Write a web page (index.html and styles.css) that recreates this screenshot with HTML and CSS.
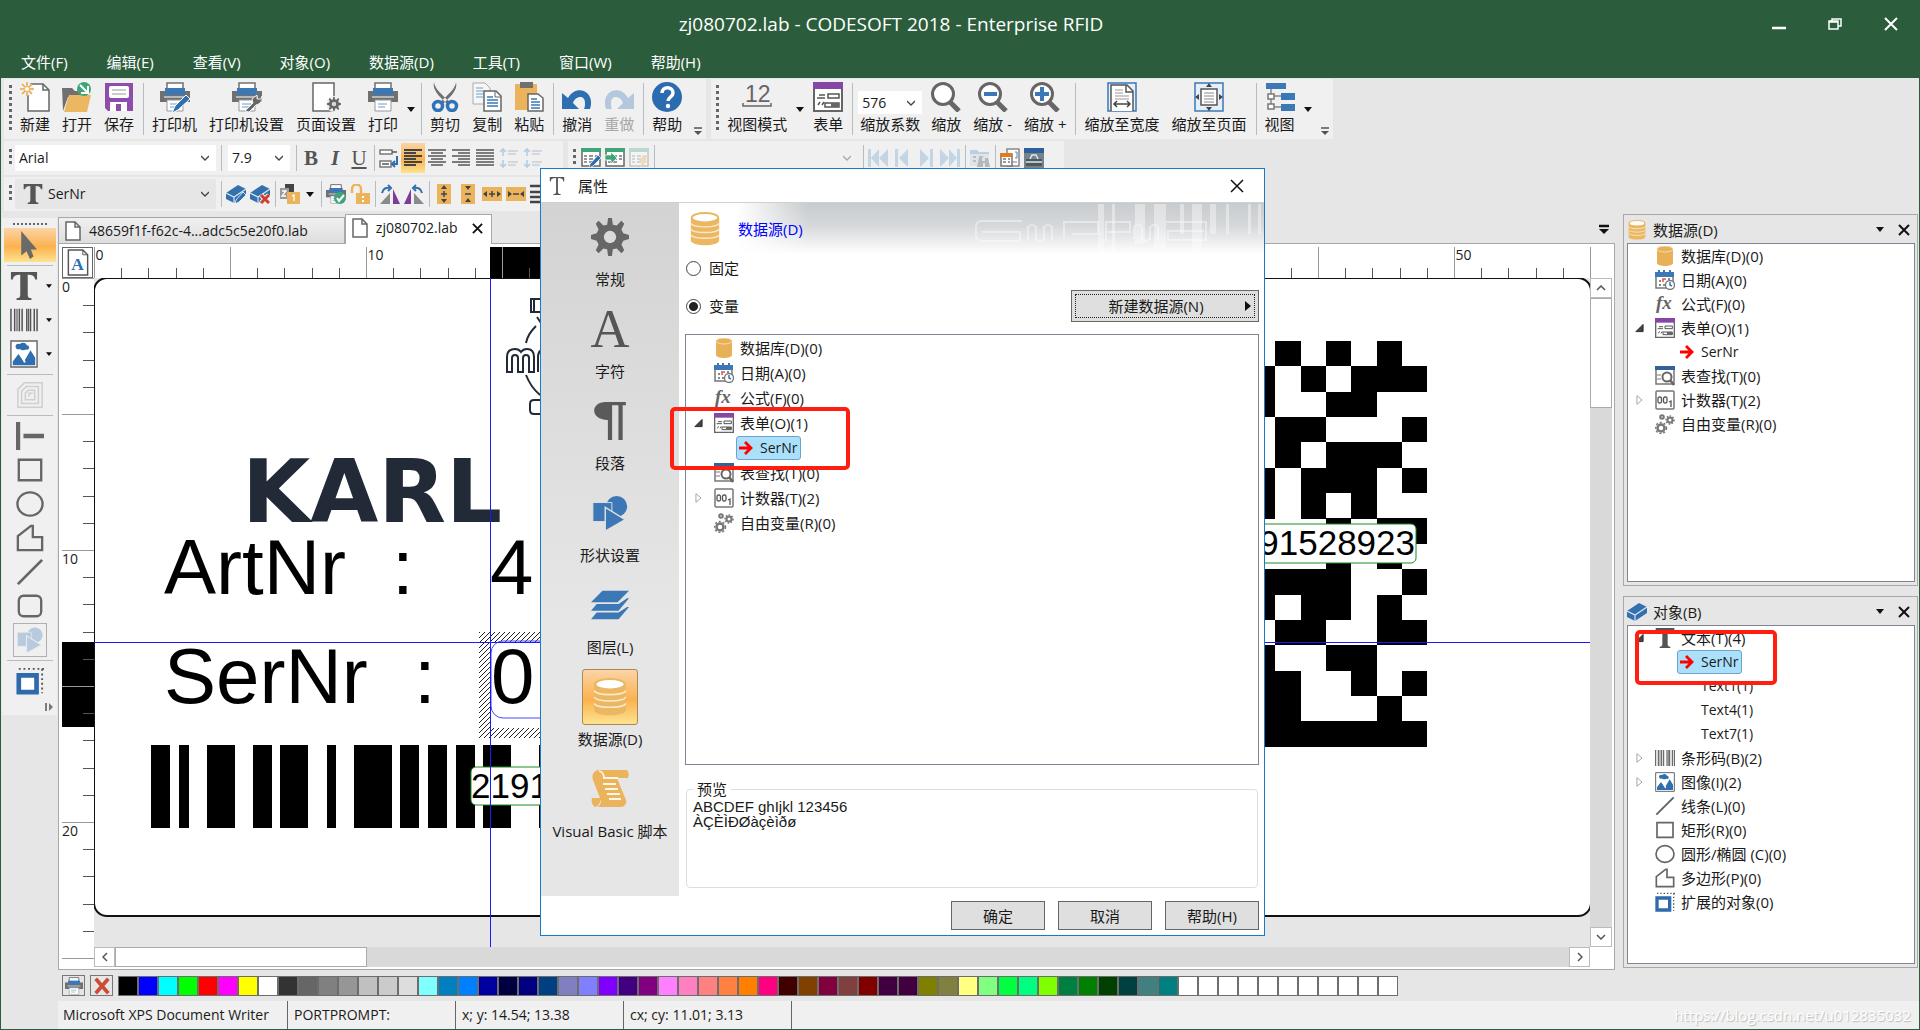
FILE: index.html
```html
<!DOCTYPE html>
<html lang="zh-CN">
<head>
    <meta charset="UTF-8">
    <meta name="viewport" content="width=device-width, initial-scale=1.0">
    <title>zj080702.lab - CODESOFT 2018 - Enterprise RFID</title>
    <link rel="stylesheet" href="styles.css">
</head>
<body>
    <svg class="sprite" aria-hidden="true">
        <symbol id="i-new" viewBox="0 0 30 30"><path d="M8 2h15l6 6v21H8z" fill="#fff" stroke="#666" stroke-width="1.5"/><path d="M23 2v6h6" fill="none" stroke="#666" stroke-width="1.5"/><circle cx="7" cy="7" r="6.5" fill="#f0f0f0"/><path d="M7 0v14M0 7h14M2 2l10 10M12 2L2 12" stroke="#e8a84a" stroke-width="1.5"/><circle cx="7" cy="7" r="2" fill="#fff"/></symbol>
        <symbol id="i-open" viewBox="0 0 30 30"><path d="M0 6h10l3 3h10v6H6L1 29z" fill="#707070"/><path d="M7 13h22l-4 17H2z" fill="#ebb762"/><circle cx="22" cy="7" r="7" fill="#3fa578"/><path d="M18 3l7 7M26 4v7h-7" fill="none" stroke="#fff" stroke-width="2"/></symbol>
        <symbol id="i-save" viewBox="0 0 30 30"><path d="M1 1h28v28H4l-3-3z" fill="#8e4cac"/><rect x="5" y="4" width="20" height="12" rx="2" fill="#fff"/><path d="M8 8h14M8 12h14" stroke="#999"/><path d="M6 20h17v9H6z" fill="#fff"/><path d="M12 22h5v7h-5z" fill="#8e4cac"/></symbol>
        <symbol id="i-printer" viewBox="0 0 30 30"><path d="M7 7V1h16v6" fill="#fff" stroke="#707070" stroke-width="1.5"/><path d="M0 9h30v11H0z" fill="#707070"/><path d="M5 6h20v7H5z" fill="#3b78b5"/><path d="M4 15h22" stroke="#fff"/><path d="M7 18h16v11H7z" fill="#fff" stroke="#999"/><path d="M10 22h9M10 25h7" stroke="#9dbfe0" stroke-width="1.5"/></symbol>
        <symbol id="i-pencil" viewBox="0 0 30 30"><path d="M26 13l4 4-12 11-6 3 3-7z" fill="#2f6fb0" stroke="#fff" stroke-width="1"/></symbol>
        <symbol id="i-gear" viewBox="0 0 40 40"><path d="M18 0h4l1 7 4 1 5-5 3 3-3 6 2 4 6 2v4l-6 2-2 4 3 6-3 3-5-5-4 1-1 7h-4l-1-7-4-1-5 5-3-3 3-6-2-4-6-2v-4l6-2 2-4-3-6 3-3 5 5 4-1z" fill="#666"/><circle class="hole" cx="20" cy="20" r="6.5" fill="#dadada"/></symbol>
        <symbol id="i-page-gear" viewBox="0 0 30 30"><path d="M2 1h21v28H2z" fill="#fff" stroke="#666" stroke-width="1.5"/><circle cx="23" cy="22" r="8" fill="#f0f0f0"/><use href="#i-gear" x="16" y="15" width="14" height="14"/></symbol>
        <symbol id="i-cut" viewBox="0 0 30 30"><path d="M4 0c0 6 9 14 16 20l-3 2C9 14 2 8 4 0zM26 0c0 6-9 14-16 20l3 2C21 14 28 8 26 0z" fill="#707070"/><circle cx="8" cy="24" r="4.500" fill="none" stroke="#2f74b8" stroke-width="3.500"/><circle cx="22" cy="24" r="4.500" fill="none" stroke="#2f74b8" stroke-width="3.500"/></symbol>
        <symbol id="i-copy" viewBox="0 0 30 30"><path d="M1 1h12l5 5v16H1z" fill="#f7f7f7" stroke="#aaa"/><path d="M4 6h7M4 9h7M4 12h7M4 15h7" stroke="#6b9fd3"/><path d="M12 9h12l5 5v15H12z" fill="#fff" stroke="#666" stroke-width="1.5"/><path d="M23 9v6h6" fill="none" stroke="#666"/><path d="M15 15h6M15 18h11M15 21h11M15 24h11" stroke="#3b78b5" stroke-width="1.5"/></symbol>
        <symbol id="i-paste" viewBox="0 0 30 30"><path d="M1 2h22v26H1z" fill="#ebb45c"/><path d="M6 0h3l2-1h3l2 1h3v6H6z" fill="#707070"/><path d="M14 12h10l5 4v13H14z" fill="#fff" stroke="#666" stroke-width="1.5"/><path d="M17 17h6M17 20h9M17 23h9M17 26h9" stroke="#3b78b5" stroke-width="1.5"/></symbol>
        <symbol id="i-undo" viewBox="0 0 30 30"><path d="M0 11v16h17l-6-6c2-7 12-9 12 0 0 2 0 4-1 6h6c6-18-14-26-22-11z" fill="#2d6fb2"/></symbol>
        <symbol id="i-help" viewBox="0 0 30 30"><circle cx="15" cy="15" r="15" fill="#2b6cb0"/><path d="M10 11c0-7 11-7 11 0 0 4-5 4-5 8" fill="none" stroke="#fff" stroke-width="3.5"/><circle cx="16" cy="24" r="2.2" fill="#fff"/></symbol>
        <symbol id="i-mode" viewBox="0 0 30 30"><path d="M1 21v3h28v-3" fill="none" stroke="#666" stroke-width="1.5"/><text x="3" y="20" class="mode-text">12</text></symbol>
        <symbol id="i-form" viewBox="0 0 30 30"><path d="M1 1h28v28H1z" fill="#fff" stroke="#666" stroke-width="2"/><path d="M0 0h30v7H0z" fill="#8646a5"/><path d="M6 13h6M4 16h8M5 23l2-3M9 23l2-3" stroke="#555" stroke-width="1.5"/><path d="M15 12h11v4H15zM12 21h14v4H12z" fill="#fff" stroke="#555" stroke-width="1.5"/><path d="M18 21h8v4h-8z" fill="#666"/></symbol>
        <symbol id="i-zoom" viewBox="0 0 30 30"><circle cx="12" cy="12" r="10.5" fill="#fff" stroke="#666" stroke-width="3"/><path d="M19 20l9 9" stroke="#666" stroke-width="5"/></symbol>
        <symbol id="i-zoom-out" viewBox="0 0 30 30"><use href="#i-zoom"/><path d="M6 12h13" stroke="#3b78b5" stroke-width="4"/></symbol>
        <symbol id="i-zoom-in" viewBox="0 0 30 30"><use href="#i-zoom"/><path d="M5 12h14M12 5v14" stroke="#3b78b5" stroke-width="4"/></symbol>
        <symbol id="i-fit-width" viewBox="0 0 30 30"><path d="M1 1h28v28H1z" fill="#e4eff9" stroke="#3b78b5" stroke-width="1.5"/><path d="M4 29V3h16l6 6v20" fill="#fff" stroke="#555" stroke-width="1.5"/><path d="M19 3v7h7" fill="none" stroke="#555" stroke-width="1.5"/><path d="M8 8h8M8 11h8M8 14h14M8 17h14" stroke="#999"/><path d="M8 22h14M10 19l-3 3 3 3M20 19l3 3-3 3" fill="none" stroke="#444" stroke-width="1.5"/></symbol>
        <symbol id="i-fit-page" viewBox="0 0 30 30"><path d="M1 1h28v28H1z" fill="#e4eff9" stroke="#3b78b5" stroke-width="1.5"/><path d="M7 7h16v16H7z" fill="#fff" stroke="#555" stroke-width="1.5"/><path d="M10 11h10M10 14h10M10 17h10M10 20h10" stroke="#888"/><path d="M15 1l3 4h-6zM15 29l3-4h-6zM1 15l4-3v6zM29 15l-4-3v6z" fill="#444"/></symbol>
        <symbol id="i-view" viewBox="0 0 30 30"><path d="M1 1h20v6H1zM16 11h14v7H16zM16 22h14v7H16z" fill="#3b78b5"/><path d="M6 7v19M6 14h10M6 25h10" fill="none" stroke="#888" stroke-width="1.5"/><path d="M3 12h6v5H3zM3 22h6v5H3z" fill="#fff" stroke="#777" stroke-width="1.5"/></symbol>
        <symbol id="i-block" viewBox="0 0 20 20"><path d="M1 2h12v4H1zM1 13h11v6H1z" fill="#fff" stroke="#777" stroke-width="1.5"/><path d="M13 4h5M3 16h7" stroke="#555" stroke-width="1.5"/><path d="M18 8v8h-4M16 13l-3 3 3 3" fill="none" stroke="#2f6fb0" stroke-width="2"/></symbol>
        <symbol id="i-left" viewBox="0 0 20 20"><path d="M1 2h18M1 5h12M1 8h18M1 11h12M1 14h18M1 17h12" stroke="#444" stroke-width="1.8"/></symbol>
        <symbol id="i-center" viewBox="0 0 20 20"><path d="M1 2h18M4 5h12M1 8h18M4 11h12M1 14h18M4 17h12" stroke="#555" stroke-width="1.6"/></symbol>
        <symbol id="i-right" viewBox="0 0 20 20"><path d="M1 2h18M7 5h12M1 8h18M7 11h12M1 14h18M7 17h12" stroke="#555" stroke-width="1.6"/></symbol>
        <symbol id="i-justify" viewBox="0 0 20 20"><path d="M1 2h18M1 5h18M1 8h18M1 11h18M1 14h18M1 17h18" stroke="#555" stroke-width="1.6"/></symbol>
        <symbol id="i-space" viewBox="0 0 20 20"><path d="M9 3h10M9 6h8M9 14h10M9 17h8" stroke="#c9ced3" stroke-width="1.6"/><path d="M4 8V1M1 4l3-3 3 3M4 12v7M1 16l3 3 3-3" fill="none" stroke="#b5cbe0" stroke-width="1.6"/></symbol>
        <symbol id="i-table" viewBox="0 0 20 20"><path d="M1 1h18v17H1z" fill="#fff" stroke="#666" stroke-width="1.5"/><path d="M0 0h20v4H0z" fill="#3fa578"/><path d="M3 8h3M8 8h4M14 8h3M3 11h3M8 11h4M14 11h3M3 14h3M8 14h4" stroke="#777" stroke-width="1.5"/></symbol>
        <symbol id="i-table-edit" viewBox="0 0 20 20"><use href="#i-table"/><path d="M17 7l3 3-8 8-4 2 1-4z" fill="#2f6fb0" stroke="#fff" stroke-width=".7"/></symbol>
        <symbol id="i-table-import" viewBox="0 0 20 20"><use href="#i-table"/><path d="M0 7h6V4l6 6-6 6v-4H0z" fill="#3fa578" stroke="#fff" stroke-width=".7"/></symbol>
        <symbol id="i-table-flash" viewBox="0 0 20 20"><use href="#i-table"/><path d="M14 7l5 1-4 4 4 1-9 7 3-6-3-1z" fill="#e8a84a"/></symbol>
        <symbol id="i-prev" viewBox="0 0 20 20"><path d="M3 1h3v18H3zM16 1v18L7 10z" fill="#c3d4e5"/></symbol>
        <symbol id="i-first" viewBox="0 0 20 20"><path d="M0 1h3v18H0zM11 1v18l-8-9zM20 1v18l-9-9z" fill="#c3d4e5"/></symbol>
        <symbol id="i-find" viewBox="0 0 20 20"><path d="M0 2h7l2 2h10v14H0z" fill="#dde4ea"/><path d="M0 2h7l2 2h10v2H0z" fill="#bcd0e3"/><path d="M3 9h3M9 9h4M3 13h3" stroke="#b9bec2" stroke-width="2"/><path d="M9 10h3v3h3v-3h3l2 9h-5v-4h-2v4H7z" fill="#b4b8bc"/></symbol>
        <symbol id="i-forms" viewBox="0 0 20 20"><path d="M7 1h12v17H7z" fill="#fff" stroke="#888" stroke-width="1.5"/><path d="M15 4h2v6h-2M9 14h8" fill="none" stroke="#6a7fa8"/><path d="M1 6h11v12H1z" fill="#fff" stroke="#777" stroke-width="1.5"/><path d="M0 5h12v4H0z" fill="#e27a1f"/><path d="M3 11h3M8 11h2M3 14h3M8 14h2" stroke="#777" stroke-width="1.5"/></symbol>
        <symbol id="i-toolbox" viewBox="0 0 20 20"><path d="M0 0h20v20H0z" fill="#77828b"/><path d="M0 0h20v5H0z" fill="#2d5f9c"/><path d="M2 11h16v7H2z" fill="#4d5961"/><path d="M6 11l2-4h4l2 4M2 14h16" fill="none" stroke="#dfe6ea" stroke-width="1.5"/></symbol>
        <symbol id="i-cube" viewBox="0 0 20 20"><path d="M0 9L12 1l8 4v6L8 19l-8-4z" fill="#3470ad"/><path d="M0 9l8 4 12-8M8 13v6" fill="none" stroke="#d8e6f3" stroke-width="1.2"/></symbol>
        <symbol id="i-cube-edit" viewBox="0 0 20 20"><use href="#i-cube"/><path d="M17 8l3 3-7 7-4 2 1-4z" fill="#2f6fb0" stroke="#fff" stroke-width=".8"/></symbol>
        <symbol id="i-cube-del" viewBox="0 0 20 20"><use href="#i-cube"/><path d="M11 11l8 8M19 11l-8 8" stroke="#f0f0f0" stroke-width="5"/><path d="M11 11l8 8M19 11l-8 8" stroke="#cf3f2b" stroke-width="3"/></symbol>
        <symbol id="i-order" viewBox="0 0 20 20"><path d="M5 0h9v9H5z" fill="#444"/><path d="M0 4h9v11H0z" fill="#9a9a9a"/><path d="M7 8h13v12H7z" fill="#ebb45c"/><path d="M2 7h4l-4 5h4M12 12l2-1v6" fill="none" stroke="#fff" stroke-width="1.3"/></symbol>
        <symbol id="i-print-ok" viewBox="0 0 20 20"><use href="#i-printer" width="20" height="20"/><circle cx="14" cy="14" r="6" fill="#3fa578"/><path d="M11 14l2 3 5-6" fill="none" stroke="#fff" stroke-width="2"/></symbol>
        <symbol id="i-lock" viewBox="0 0 20 20"><path d="M2 9V5c0-6 9-6 9 0v4" fill="none" stroke="#ebb45c" stroke-width="2.5"/><path d="M6 9h14v11H6z" fill="#ebb45c"/><path d="M13 12v2M13 16v2" stroke="#fff" stroke-width="2"/></symbol>
        <symbol id="i-flip" viewBox="0 0 20 20"><path d="M10 9v11H0z" fill="#8a8a8a"/><path d="M13 5v15h7z" fill="#7d3c9c"/><path d="M2 9c1-5 5-6 9-5M8 1l3 3-3 3" fill="none" stroke="#2f6fb0" stroke-width="2"/></symbol>
        <symbol id="i-vexpand" viewBox="0 0 20 20"><path d="M3 0h14v20H3z" fill="#ebb45c"/><path d="M10 1l3 4H7zM10 19l3-4H7z" fill="#444"/><path d="M7 10h6M10 7v6" stroke="#444" stroke-width="1.5"/></symbol>
        <symbol id="i-vshrink" viewBox="0 0 20 20"><path d="M3 0h14v20H3z" fill="#ebb45c"/><path d="M10 6l3-4H7zM10 14l3 4H7z" fill="#444"/><path d="M7 10h6" stroke="#444" stroke-width="1.5"/></symbol>
        <symbol id="i-hexpand" viewBox="0 0 20 20"><path d="M0 3h20v14H0z" fill="#ebb45c"/><path d="M1 10l4-3v6zM19 10l-4-3v6z" fill="#444"/><path d="M7 10h6M10 7v6" stroke="#444" stroke-width="1.5"/></symbol>
        <symbol id="i-hshrink" viewBox="0 0 20 20"><path d="M0 3h20v14H0z" fill="#ebb45c"/><path d="M6 10L2 7v6zM14 10l4-3v6z" fill="#444"/><path d="M7 10h6" stroke="#444" stroke-width="1.5"/></symbol>
        <symbol id="i-lines" viewBox="0 0 20 20"><path d="M0 2h20M0 8h20M0 13h20M0 18h20" stroke="#444" stroke-width="2.5"/></symbol>
        <symbol id="i-text" viewBox="0 0 30 30"><path d="M1 0h28v8h-2c-1-4-3-5-8-5v21c0 3 1 4 4 4v2H7v-2c3 0 4-1 4-4V3c-5 0-7 1-8 5H1z" fill="#555"/></symbol>
        <symbol id="i-text-thin" viewBox="0 0 16 20"><path d="M0 0h16v5h-1c0-3-2-4-6-4v16c0 1 1 2 3 2v1H4v-1c2 0 3-1 3-2V1C3 1 1 2 1 5H0z" fill="#555"/></symbol>
        <symbol id="i-barcode" viewBox="0 0 30 24"><path d="M1 0v24M5 0v24M10 0v24M13 0v24M18 0v24M22 0v24M26 0v24M29 0v24" stroke="#555" stroke-width="1.6"/><path d="M7.500 0v24M20 0v24" stroke="#333"/></symbol>
        <symbol id="i-image" viewBox="0 0 30 30"><path d="M1 1h28v28H1z" fill="#fff" stroke="#666" stroke-width="1.5"/><path d="M3 27v-4l6-8 6 8 7-12 5 8v8z" fill="#2f6fb0"/><path d="M11 15l5 9" stroke="#fff" stroke-width="2"/><circle cx="9" cy="7" r="3" fill="#2f6fb0"/><circle cx="14" cy="7" r="4" fill="#2f6fb0"/><circle cx="18" cy="8" r="2.500" fill="#2f6fb0"/></symbol>
        <symbol id="i-rfid" viewBox="0 0 30 30"><path d="M2 28V9l7-7h19v26zM6 24V11l5-5h13v18zM10 20v-7l3-3h7v10zM14 17v-4h4" fill="none" stroke="#cfcfcf" stroke-width="1.6"/></symbol>
        <symbol id="i-arrow" viewBox="0 0 24 32"><path d="M2 0l18 21h-7l3 8-4 3-4-9-6 5z" fill="#6a6a6a"/></symbol>
        <symbol id="i-tline" viewBox="0 0 30 30"><path d="M2 0v30M8 15h22" stroke="#666" stroke-width="5"/></symbol>
        <symbol id="i-rect" viewBox="0 0 30 30"><path d="M3 4h24v22H3z" fill="none" stroke="#666" stroke-width="2.500"/></symbol>
        <symbol id="i-ellipse" viewBox="0 0 30 30"><ellipse cx="15" cy="15" rx="13.500" ry="12.500" fill="none" stroke="#666" stroke-width="2.500"/></symbol>
        <symbol id="i-poly" viewBox="0 0 30 30"><path d="M2 28V13L16 2h2v12h10v14z" fill="none" stroke="#666" stroke-width="2.500"/></symbol>
        <symbol id="i-line" viewBox="0 0 30 30"><path d="M2 28L28 2" stroke="#666" stroke-width="3"/></symbol>
        <symbol id="i-rrect" viewBox="0 0 30 30"><rect x="3" y="4" width="24" height="22" rx="5" fill="none" stroke="#666" stroke-width="2.500"/></symbol>
        <symbol id="i-shapes" viewBox="0 0 40 40"><circle cx="27" cy="13" r="11" fill="#3b78b5"/><path d="M2 9h20v20H2z" fill="#3b78b5" stroke="#e0e0e0" stroke-width="1"/><path d="M15 14l21 13-21 12z" fill="#3b78b5" stroke="#e0e0e0" stroke-width="1.500"/></symbol>
        <symbol id="i-extend" viewBox="0 0 30 30"><path d="M3 9h19v18H3z" fill="#fff" stroke="#2f6bab" stroke-width="5"/><path d="M3 2h27M28 2v26" stroke="#555" stroke-width="2" stroke-dasharray="2 3"/></symbol>
        <symbol id="i-doc" viewBox="0 0 16 20"><path d="M1 1h9l5 5v13H1z" fill="#fff" stroke="#666" stroke-width="1.500"/><path d="M10 1v5h5" fill="none" stroke="#666" stroke-width="1.500"/></symbol>
        <symbol id="i-stack" viewBox="0 0 32 36"><path d="M1 6v24c0 7 30 7 30 0V6z" fill="#ebb762"/><ellipse cx="16" cy="6" rx="14" ry="5" fill="#fff" stroke="#ebb762" stroke-width="2"/><path d="M1 12c2 5 28 5 30 0M1 18c2 5 28 5 30 0M1 24c2 5 28 5 30 0" fill="none" stroke="#fbe9c8" stroke-width="1.500"/></symbol>
        <symbol id="i-db" viewBox="0 0 20 20"><path d="M2 3v14c0 4 16 4 16 0V3z" fill="#e8b057"/><ellipse cx="10" cy="3" rx="8" ry="3" fill="#e8b057" stroke="#f7dcae"/></symbol>
        <symbol id="i-date" viewBox="0 0 20 20"><path d="M1 3h17v15H1z" fill="#fff" stroke="#777" stroke-width="1.500"/><path d="M0 2h19v5H0z" fill="#3b78b5"/><path d="M4 0v4M9 0v4M15 0v4" stroke="#3b78b5" stroke-width="2"/><path d="M4 11h2M4 15h2M8 15h2M13 9h2" stroke="#888" stroke-width="2"/><path d="M8 12V9h3" fill="none" stroke="#d9534f" stroke-width="1.500"/><circle cx="15" cy="15" r="4.500" fill="#fff" stroke="#777" stroke-width="1.300"/><path d="M15 12v3l2 1" fill="none" stroke="#3b78b5" stroke-width="1.500"/></symbol>
        <symbol id="i-fx" viewBox="0 0 20 20"><text x="1" y="15" class="fx">fx</text></symbol>
        <symbol id="i-lookup" viewBox="0 0 20 20"><path d="M1 1h18v17H1z" fill="#fff" stroke="#777" stroke-width="1.500"/><path d="M0 0h20v4H0z" fill="#2f6399"/><path d="M2 9h4M2 13h4" stroke="#777"/><circle cx="12" cy="11" r="4.500" fill="#fff" stroke="#666" stroke-width="2"/><path d="M15 14l4 5" stroke="#666" stroke-width="2.500"/></symbol>
        <symbol id="i-counter" viewBox="0 0 20 20"><rect x="1" y="1" width="18" height="18" rx="1" fill="#fff" stroke="#777" stroke-width="1.500"/><rect x="3" y="7" width="3.500" height="6" rx="1.500" fill="none" stroke="#555" stroke-width="1.300"/><rect x="8.500" y="7" width="3.500" height="6" rx="1.500" fill="none" stroke="#555" stroke-width="1.300"/><path d="M14 12l2-1v6" fill="none" stroke="#555" stroke-width="1.300"/></symbol>
        <symbol id="i-gears" viewBox="0 0 20 20"><g fill="none" stroke="#777"><circle cx="6" cy="14" r="3.500" stroke-width="2.500"/><circle cx="6" cy="14" r="5.500" stroke-width="1.500" stroke-dasharray="2 2"/><circle cx="15" cy="6" r="2.500" stroke-width="2"/><circle cx="15" cy="6" r="4" stroke-width="1.500" stroke-dasharray="1.500 1.500"/><circle cx="7" cy="3" r="1.800" stroke-width="2"/></g></symbol>
        <symbol id="i-go" viewBox="0 0 14 14"><path d="M0 7h11M6 1l6 6-6 6" fill="none" stroke="#f00" stroke-width="2.800"/></symbol>
        <symbol id="i-pilcrow" viewBox="0 0 30 36"><path d="M30 0v3h-3v33h-4V3h-6v33h-4V17C-4 17-4 0 11 0z" fill="#5a5a5a"/></symbol>
        <symbol id="i-layers" viewBox="0 0 40 30"><path d="M12 0h28L28 12H0zM6 14h23l9-6h2L29 21H0zM6 23h23l9-6h2L29 30H0z" fill="#3b78b5"/></symbol>
        <symbol id="i-script" viewBox="0 0 38 38"><path d="M8 0h28c2 2 2 5 1 8H26l9 22c1 4-2 7-5 7H6c4-2 5-6 3-9L2 10C0 4 4 0 8 0zM1 28h9c0 5-4 9-6 9-3-2-4-6-3-9z" fill="#ebb45c"/><path d="M8 1c4 1 5 4 5 7h14M12 14h13M14 19h13M16 24h13M18 29h12" fill="none" stroke="#fff6e4" stroke-width="1.800"/></symbol>
        <symbol id="i-open-node" viewBox="0 0 10 10"><path d="M9 1v8H1z" fill="#444" stroke="#222"/></symbol>
        <symbol id="i-closed-node" viewBox="0 0 10 14"><path d="M2 2l6 5-6 5z" fill="#fff" stroke="#999"/></symbol>
        <symbol id="i-x" viewBox="0 0 12 12"><path d="M1 1l10 10M11 1L1 11" stroke="#111" stroke-width="2"/></symbol>
        <symbol id="i-caret" viewBox="0 0 8 5"><path d="M0 0h8L4 5z" fill="#111"/></symbol>
        <symbol id="i-more" viewBox="0 0 8 8"><path d="M0 1h8" stroke="#555" stroke-width="1.500"/><path d="M0 4h8L4 8z" fill="#555"/></symbol>
    </svg>

    <header class="titlebar">
        <h1>zj080702.lab - CODESOFT 2018 - Enterprise RFID</h1>
        <div class="window-buttons">
            <button aria-label="最小化"><svg viewBox="0 0 14 14"><path d="M0 11h14" stroke="#fff" stroke-width="2.500"/></svg></button>
            <button aria-label="还原"><svg viewBox="0 0 14 14"><path d="M1 4h9v8H1zM4 4V2h9v7h-3M1 5h9" fill="none" stroke="#fff" stroke-width="1.500"/></svg></button>
            <button aria-label="关闭"><svg viewBox="0 0 14 14"><path d="M1 1l12 12M13 1L1 13" stroke="#fff" stroke-width="2"/></svg></button>
        </div>
    </header>
    <nav class="menubar">
        <a href="#">文件(F)</a><a href="#">编辑(E)</a><a href="#">查看(V)</a><a href="#">对象(O)</a><a href="#">数据源(D)</a><a href="#">工具(T)</a><a href="#">窗口(W)</a><a href="#">帮助(H)</a>
    </nav>

    <div class="toolbars">
        <div class="toolbar-row">
            <div class="toolbar large">
                <span class="grip"></span>
                <button><svg><use href="#i-new"/></svg>新建</button>
                <button><svg><use href="#i-open"/></svg>打开</button>
                <button><svg><use href="#i-save"/></svg>保存</button>
                <span class="sep"></span>
                <button><svg viewBox="0 0 30 30"><use href="#i-printer"/><use href="#i-pencil"/></svg>打印机</button>
                <button><svg viewBox="0 0 30 30"><use href="#i-printer"/><path d="M13 29l8-8-1-4 5-4v4h4l1-3c1 5-2 8-6 9l-7 7z" fill="#666" stroke="#f0f0f0"/></svg>打印机设置</button>
                <button><svg><use href="#i-page-gear"/></svg>页面设置</button>
                <button><svg><use href="#i-printer"/></svg>打印</button>
                <svg class="caret"><use href="#i-caret"/></svg>
                <span class="sep"></span>
                <button><svg><use href="#i-cut"/></svg>剪切</button>
                <button><svg><use href="#i-copy"/></svg>复制</button>
                <button><svg><use href="#i-paste"/></svg>粘贴</button>
                <span class="sep"></span>
                <button><svg><use href="#i-undo"/></svg>撤消</button>
                <button disabled><svg class="mirror"><use href="#i-undo"/></svg>重做</button>
                <span class="sep"></span>
                <button><svg><use href="#i-help"/></svg>帮助</button>
                <svg class="more"><use href="#i-more"/></svg>
            </div>
            <div class="toolbar large">
                <span class="grip"></span>
                <button><svg><use href="#i-mode"/></svg>视图模式</button>
                <svg class="caret"><use href="#i-caret"/></svg>
                <button><svg><use href="#i-form"/></svg>表单</button>
                <span class="sep"></span>
                <label class="zoom-factor"><select><option>576</option></select>缩放系数</label>
                <button><svg><use href="#i-zoom"/></svg>缩放</button>
                <button><svg><use href="#i-zoom-out"/></svg>缩放 -</button>
                <button><svg><use href="#i-zoom-in"/></svg>缩放 +</button>
                <span class="sep"></span>
                <button><svg><use href="#i-fit-width"/></svg>缩放至宽度</button>
                <button><svg><use href="#i-fit-page"/></svg>缩放至页面</button>
                <span class="sep"></span>
                <button><svg><use href="#i-view"/></svg>视图</button>
                <svg class="caret"><use href="#i-caret"/></svg>
                <svg class="more"><use href="#i-more"/></svg>
            </div>
        </div>
        <div class="toolbar-row">
            <div class="toolbar small">
                <span class="grip"></span>
                <select class="wide" aria-label="字体"><option>Arial</option></select>
                <span class="sep"></span>
                <select class="size" aria-label="字号"><option>7.9</option></select>
                <span class="sep"></span>
                <button class="letter bold">B</button>
                <button class="letter italic">I</button>
                <button class="letter underline">U</button>
                <span class="sep"></span>
                <button aria-label="文本块"><svg><use href="#i-block"/></svg></button>
                <button class="active" aria-label="左对齐"><svg><use href="#i-left"/></svg></button>
                <button aria-label="居中"><svg><use href="#i-center"/></svg></button>
                <button aria-label="右对齐"><svg><use href="#i-right"/></svg></button>
                <button aria-label="两端对齐"><svg><use href="#i-justify"/></svg></button>
                <button aria-label="增加间距"><svg><use href="#i-space"/></svg></button>
                <button aria-label="减小间距"><svg><use href="#i-space"/></svg></button>
                <span class="end-mark"></span>
            </div>
            <div class="toolbar small">
                <span class="grip"></span>
                <button aria-label="编辑表"><svg><use href="#i-table-edit"/></svg></button>
                <button aria-label="导入表"><svg><use href="#i-table-import"/></svg></button>
                <button aria-label="刷新" disabled><svg><use href="#i-table-flash"/></svg></button>
                <span class="sep"></span>
                <select class="wide blank" aria-label="记录" disabled><option></option></select>
                <span class="sep"></span>
                <button aria-label="首条"><svg><use href="#i-first"/></svg></button>
                <button aria-label="上一条"><svg><use href="#i-prev"/></svg></button>
                <button aria-label="下一条"><svg class="mirror"><use href="#i-prev"/></svg></button>
                <button aria-label="末条"><svg class="mirror"><use href="#i-first"/></svg></button>
                <span class="sep"></span>
                <button aria-label="查找"><svg><use href="#i-find"/></svg></button>
                <span class="sep"></span>
                <button aria-label="表单"><svg><use href="#i-forms"/></svg></button>
                <button aria-label="工具箱"><svg><use href="#i-toolbox"/></svg></button>
                <span class="end-mark"></span>
            </div>
        </div>
        <div class="toolbar-row">
            <div class="toolbar small">
                <span class="grip"></span>
                <label class="object-select"><svg><use href="#i-text"/></svg><select aria-label="对象"><option>SerNr</option></select></label>
                <span class="sep"></span>
                <button aria-label="编辑对象"><svg><use href="#i-cube-edit"/></svg></button>
                <button aria-label="删除对象"><svg><use href="#i-cube-del"/></svg></button>
                <span class="sep"></span>
                <button aria-label="次序"><svg><use href="#i-order"/></svg></button>
                <svg class="caret"><use href="#i-caret"/></svg>
                <span class="sep"></span>
                <button aria-label="可打印"><svg><use href="#i-print-ok"/></svg></button>
                <button aria-label="锁定"><svg><use href="#i-lock"/></svg></button>
                <span class="sep"></span>
                <button aria-label="右转"><svg><use href="#i-flip"/></svg></button>
                <button aria-label="左转"><svg class="mirror"><use href="#i-flip"/></svg></button>
                <span class="sep"></span>
                <button aria-label="增高"><svg><use href="#i-vexpand"/></svg></button>
                <button aria-label="减高"><svg><use href="#i-vshrink"/></svg></button>
                <button aria-label="加宽"><svg><use href="#i-hexpand"/></svg></button>
                <button aria-label="减宽"><svg><use href="#i-hshrink"/></svg></button>
                <button aria-label="线宽"><svg><use href="#i-lines"/></svg></button>
            </div>
        </div>
    </div>

    <div class="workspace">
        <aside class="tools">
            <div class="tool-list">
                <span class="grip-h"></span>
                <button class="active" aria-label="选择"><svg><use href="#i-arrow"/></svg></button>
                <hr>
                <button aria-label="文本"><svg><use href="#i-text"/></svg><svg class="caret"><use href="#i-caret"/></svg></button>
                <button aria-label="条形码"><svg><use href="#i-barcode"/></svg><svg class="caret"><use href="#i-caret"/></svg></button>
                <button aria-label="图像"><svg><use href="#i-image"/></svg><svg class="caret"><use href="#i-caret"/></svg></button>
                <hr>
                <button aria-label="RFID" disabled><svg><use href="#i-rfid"/></svg></button>
                <hr>
                <button aria-label="线条"><svg><use href="#i-tline"/></svg></button>
                <button aria-label="矩形"><svg><use href="#i-rect"/></svg></button>
                <button aria-label="圆形"><svg><use href="#i-ellipse"/></svg></button>
                <button aria-label="多边形"><svg><use href="#i-poly"/></svg></button>
                <button aria-label="斜线"><svg><use href="#i-line"/></svg></button>
                <button aria-label="圆角矩形"><svg><use href="#i-rrect"/></svg></button>
                <button class="boxed" aria-label="形状" disabled><svg><use href="#i-shapes"/></svg></button>
                <hr>
                <button aria-label="扩展的对象"><svg><use href="#i-extend"/></svg></button>
                <svg class="expand" viewBox="0 0 8 8"><path d="M1 0v8" stroke="#555" stroke-width="1.500"/><path d="M4 0v8l4-4z" fill="#777"/></svg>
            </div>
        </aside>

        <div class="content">
            <div class="columns">
                <main class="document">
                    <div class="tabs">
                        <button class="tab"><svg><use href="#i-doc"/></svg>48659f1f-f62c-4...adc5c5e20f0.lab</button>
                        <button class="tab current"><svg><use href="#i-doc"/></svg>zj080702.lab<svg class="close"><use href="#i-x"/></svg></button>
                        <svg class="tab-menu" viewBox="0 0 10 10"><path d="M0 2h10" stroke="#111" stroke-width="2.500"/><path d="M0 5h10L5 10z" fill="#111"/></svg>
                    </div>
                    <div class="frame">
                        <button class="corner" aria-label="标签属性"><svg viewBox="0 0 22 28"><path d="M1 1h15l5 5v21H1z" fill="#fff" stroke="#555" stroke-width="1.500"/><path d="M16 1v5h5" fill="none" stroke="#555"/><text x="4" y="22" class="corner-a">A</text></svg></button>
                        <svg class="ruler-h" id="rulerH"></svg>
                        <svg class="ruler-v" id="rulerV"></svg>
                        <svg class="sheet" id="sheet">
                            <defs>
                                <pattern id="hatch" width="5" height="5" patternUnits="userSpaceOnUse"><path d="M0 5L5 0" stroke="#222"/></pattern>
                            </defs>
                            <rect class="label" x="0" y="0" width="1497" height="638" rx="13"/>
                            <g class="logo">
                                <path d="M449 21h-12v13h12M440 21v13M443 39l4 6M442 48c-6 6-9 11-10 17M432 97c4 10 8 15 14 20M448 122h-8q-4 0-4 4v6q0 4 4 4h8"/>
                                <path d="M413 94V79q0-8 8-8 4 0 6 3 2-3 6-3 7 0 7 8v15h-5V80q0-3-3-3t-3 3v14h-5V80q0-3-3-3t-3 3v14zM444 94V79q0-6 5-8"/>
                            </g>
                            <text class="brand" x="148" y="244">KARL</text>
                            <g class="field">
                                <text x="70" y="316">ArtNr</text><text x="298" y="316">:</text><text x="396" y="316">4</text>
                                <text x="70" y="425">SerNr</text><text x="320" y="425">:</text><text x="397" y="425">0</text>
                            </g>
                            <path d="M385 354h330v106H385zM396 364v86h309v-86z" fill="url(#hatch)" fill-rule="evenodd"/>
                            <rect class="selection" x="397" y="363" width="300" height="77" rx="12"/>
                            <g class="crisp" id="bars"></g>
                            <rect class="caption-box" x="377" y="489" width="300" height="38" rx="5"/>
                            <text class="caption" x="377" y="520">2191528923</text>
                            <g class="crisp" id="matrix"></g>
                            <rect class="caption-box" x="1090" y="246" width="232" height="39" rx="5"/>
                            <text class="caption end" x="1321" y="277">2191528923</text>
                            <path class="guide crisp" d="M396 0v669M0 364h1497"/>
                        </svg>
                        <div class="scroll-v"><button aria-label="上"><svg viewBox="0 0 10 6"><path d="M1 5l4-4 4 4"/></svg></button><span class="thumb"></span><button aria-label="下"><svg viewBox="0 0 10 6"><path d="M1 1l4 4 4-4"/></svg></button></div>
                        <div class="scroll-h"><button aria-label="左"><svg viewBox="0 0 6 10"><path d="M5 1L1 5l4 4"/></svg></button><span class="thumb"></span><button aria-label="右"><svg viewBox="0 0 6 10"><path d="M1 1l4 4-4 4"/></svg></button></div>
                    </div>
                </main>

                <div class="panels">
                    <section class="panel">
                        <h2><svg><use href="#i-stack"/></svg>数据源(D)<svg class="caret"><use href="#i-caret"/></svg><svg class="close"><use href="#i-x"/></svg></h2>
                        <ul class="tree">
                            <li><svg><use href="#i-db"/></svg>数据库(D)(0)</li>
                            <li><svg><use href="#i-date"/></svg>日期(A)(0)</li>
                            <li><svg><use href="#i-fx"/></svg>公式(F)(0)</li>
                            <li><svg class="node"><use href="#i-open-node"/></svg><svg><use href="#i-form"/></svg>表单(O)(1)</li>
                            <li class="child"><span class="leaf"><svg><use href="#i-go"/></svg>SerNr</span></li>
                            <li><svg><use href="#i-lookup"/></svg>表查找(T)(0)</li>
                            <li><svg class="node"><use href="#i-closed-node"/></svg><svg><use href="#i-counter"/></svg>计数器(T)(2)</li>
                            <li><svg><use href="#i-gears"/></svg>自由变量(R)(0)</li>
                        </ul>
                    </section>
                    <section class="panel">
                        <h2><svg><use href="#i-cube"/></svg>对象(B)<svg class="caret"><use href="#i-caret"/></svg><svg class="close"><use href="#i-x"/></svg></h2>
                        <ul class="tree">
                            <li><svg class="node"><use href="#i-open-node"/></svg><svg><use href="#i-text"/></svg>文本(T)(4)</li>
                            <li class="child"><span class="leaf selected"><svg><use href="#i-go"/></svg>SerNr</span></li>
                            <li class="child"><span class="leaf plain">Text1(1)</span></li>
                            <li class="child"><span class="leaf plain">Text4(1)</span></li>
                            <li class="child"><span class="leaf plain">Text7(1)</span></li>
                            <li><svg class="node"><use href="#i-closed-node"/></svg><svg><use href="#i-barcode"/></svg>条形码(B)(2)</li>
                            <li><svg class="node"><use href="#i-closed-node"/></svg><svg><use href="#i-image"/></svg>图像(I)(2)</li>
                            <li><svg><use href="#i-line"/></svg>线条(L)(0)</li>
                            <li><svg><use href="#i-rect"/></svg>矩形(R)(0)</li>
                            <li><svg><use href="#i-ellipse"/></svg>圆形/椭圆 (C)(0)</li>
                            <li><svg><use href="#i-poly"/></svg>多边形(P)(0)</li>
                            <li><svg><use href="#i-extend"/></svg>扩展的对象(0)</li>
                        </ul>
                        <span class="highlight"></span>
                    </section>
                </div>
            </div>

            <div class="colorbar">
                <button class="color-tool" aria-label="打印机颜色"><svg><use href="#i-printer"/></svg></button>
                <button class="color-tool" aria-label="无颜色"><svg viewBox="0 0 20 20"><path d="M3 2l14 16M17 2L3 18" stroke="#cf4a35" stroke-width="4"/></svg></button>
                <div class="swatches" id="swatches"></div>
            </div>
            <footer class="statusbar">
                <span class="printer-name">Microsoft XPS Document Writer</span>
                <span>PORTPROMPT:</span>
                <span>x; y: 14.54; 13.38</span>
                <span>cx; cy: 11.01; 3.13</span>
                <a class="watermark" href="#">https://blog.csdn.net/u012835032</a>
            </footer>
        </div>
    </div>

    <div class="dialog" role="dialog" aria-label="属性">
        <div class="dialog-title"><svg><use href="#i-text-thin"/></svg>属性<button aria-label="关闭"><svg viewBox="0 0 14 14"><path d="M1 1l12 12M13 1L1 13" stroke="#111" stroke-width="1.500"/></svg></button></div>
        <div class="dialog-main">
            <nav class="pages">
                <button><span class="page-icon"><svg><use href="#i-gear"/></svg></span>常规</button>
                <button><span class="page-icon letter-a">A</span>字符</button>
                <button><span class="page-icon"><svg><use href="#i-pilcrow"/></svg></span>段落</button>
                <button><span class="page-icon"><svg><use href="#i-shapes"/></svg></span>形状设置</button>
                <button><span class="page-icon"><svg><use href="#i-layers"/></svg></span>图层(L)</button>
                <button><span class="page-icon active"><svg><use href="#i-stack"/></svg></span>数据源(D)</button>
                <button><span class="page-icon"><svg><use href="#i-script"/></svg></span>Visual Basic 脚本</button>
            </nav>
            <div class="page">
                <div class="banner">
                    <svg class="banner-icon"><use href="#i-stack"/></svg>数据源(D)
                    <svg class="banner-art" viewBox="0 0 290 50"><path d="M124 0h6v50h-6zM138 0h3v50h-3zM161 0h10v40h-10zM180 0h12v46h-12zM206 0h4v30h-4zM218 0h10v46h-10zM236 0h6v30h-6zM252 0h3v30h-3zM274 0h3v30h-3zM284 0h3v30h-3z" fill="#fff" opacity=".4"/><path d="M48 17H8q-6 0-6 6v8q0 6 6 6h38v-9H8M54 36V23q4-4 8 0v12q4 4 8 0V23q4-4 8 0v13M90 34V18h34v12H98M132 38V18h24v10h-24M160 35V23q4-4 8 0v12q4 4 8 0V23q4-4 8 0v13M192 18h40v18h-38v-9h36" fill="none" stroke="#fff" stroke-width="2" opacity=".4"/></svg>
                </div>
                <div class="options">
                    <label class="radio"><input type="radio" name="source">固定</label>
                    <div class="option-row">
                        <label class="radio"><input type="radio" name="source" checked>变量</label>
                        <button class="new-source">新建数据源(N)<svg viewBox="0 0 6 10"><path d="M0 0l6 5-6 5z" fill="#111"/></svg></button>
                    </div>
                </div>
                <div class="tree-box">
                    <ul class="tree roomy">
                        <li><svg><use href="#i-db"/></svg>数据库(D)(0)</li>
                        <li><svg><use href="#i-date"/></svg>日期(A)(0)</li>
                        <li><svg><use href="#i-fx"/></svg>公式(F)(0)</li>
                        <li><svg class="node"><use href="#i-open-node"/></svg><svg><use href="#i-form"/></svg>表单(O)(1)</li>
                        <li class="child"><span class="leaf selected"><svg><use href="#i-go"/></svg>SerNr</span></li>
                        <li><svg><use href="#i-lookup"/></svg>表查找(T)(0)</li>
                        <li><svg class="node"><use href="#i-closed-node"/></svg><svg><use href="#i-counter"/></svg>计数器(T)(2)</li>
                        <li><svg><use href="#i-gears"/></svg>自由变量(R)(0)</li>
                    </ul>
                    <span class="highlight"></span>
                </div>
                <fieldset class="preview">
                    <legend>预览</legend>
                    <p>ABCDEF ghIjkl 123456<br>ÀÇÈÌÐØàçèìðø</p>
                </fieldset>
            </div>
        </div>
        <div class="dialog-actions">
            <button>确定</button>
            <button>取消</button>
            <button>帮助(H)</button>
        </div>
    </div>

    <script src="script.js"></script>
</body>
</html>
```
FILE: styles.css
```css
* {
    box-sizing: border-box;
}

body {
    font-family: "Open Sans", "Noto Sans CJK SC", sans-serif;
    font-size: 15px;
    line-height: 20px;
    color: #1a1a1a;
    background-color: #e6e6e6;
    margin: 0;
    height: 100vh;
    overflow: hidden;
    display: flex;
    flex-direction: column;
    border: 1px solid #2b5d3c;
    border-top: none;
    position: relative;
}

button, select, input {
    font: inherit;
    color: inherit;
}

button {
    background: none;
    border: none;
    padding: 0;
}

svg {
    display: block;
    flex: none;
}

.sprite {
    display: none;
}

.mirror {
    transform: scaleX(-1);
}

.caret {
    width: 8px;
    height: 5px;
}

.fx {
    font: italic bold 19px "Liberation Serif", serif;
    fill: #666;
}

.mode-text {
    font: 23px "Liberation Sans", sans-serif;
    fill: #666;
}

/* title and menu */
.titlebar {
    background-color: #2b5d3c;
    color: #fff;
    height: 48px;
    display: flex;
    align-items: center;
    position: relative;
}

.titlebar h1 {
    flex: 1;
    margin: 0;
    font-size: 19px;
    font-weight: normal;
    text-align: center;
    padding-right: 138px;
}

.window-buttons {
    position: absolute;
    right: 21px;
    display: flex;
    gap: 42px;
}

.window-buttons svg {
    width: 14px;
    height: 14px;
}

.menubar {
    background-color: #2b5d3c;
    height: 30px;
    padding: 4px 20px;
    display: flex;
    gap: 39px;
}

.menubar a {
    color: #fff;
    text-decoration: none;
}

/* toolbars */
.toolbars {
    padding: 1px 3px 0;
    height: 136px;
    flex: none;
}

.toolbar-row {
    display: flex;
    gap: 5px;
    margin-bottom: 2px;
}

.toolbar {
    background-color: #f0f0f0;
    display: flex;
    align-items: center;
}

.grip {
    width: 3px;
    height: 48px;
    margin: 0 2px 0 5px;
    background: repeating-linear-gradient(#666 0 3px, transparent 3px 6px);
}

.sep {
    width: 1px;
    align-self: stretch;
    margin: 4px 2px 4px 3px;
    background-color: #b5bcc4;
}

.large {
    height: 60px;
}

.large button, .zoom-factor {
    display: flex;
    flex-direction: column;
    align-items: center;
    justify-content: space-between;
    height: 52px;
    margin-bottom: 2px;
    padding: 0 6px;
    white-space: nowrap;
}

.large button svg {
    width: 30px;
    height: 30px;
}

.large .hole {
    fill: #f0f0f0;
}

.large button:disabled {
    color: #a8a8a8;
}

.large button:disabled svg, .small button:disabled svg {
    opacity: 0.3;
}

.large .caret {
    margin: 0 3px;
}

.more {
    width: 8px;
    height: 8px;
    align-self: flex-end;
    margin: 0 4px 4px 6px;
}

select {
    appearance: none;
    border: none;
    border-radius: 0;
    padding: 0 4px;
    font-size: 14px;
    background: #fff url("data:image/svg+xml,%3Csvg xmlns='http://www.w3.org/2000/svg' viewBox='0 0 8 6'%3E%3Cpath d='M0 1l4 4 4-4' fill='none' stroke='%23444' stroke-width='1.3'/%3E%3C/svg%3E") no-repeat right 7px center / 8px 6px;
}

.zoom-factor {
    padding: 0 3px;
}

.zoom-factor select {
    width: 64px;
    height: 23px;
    margin-top: 9px;
}

.small {
    height: 34px;
}

.small .grip {
    height: 18px;
    margin-right: 3px;
}

.small select {
    height: 26px;
}

.small .wide {
    width: 201px;
    margin-right: 2px;
}

.small .blank {
    background-color: #f0f0f0;
    opacity: 0.4;
}

.small .size {
    width: 62px;
    margin: 0 3px 0 4px;
}

.small button {
    width: 24px;
    height: 30px;
    display: grid;
    place-items: center;
}

.small button svg {
    width: 20px;
    height: 20px;
}

.small .letter {
    font: 21px "Liberation Serif", serif;
    color: #555;
}

.small .bold {
    font-weight: bold;
}

.small .italic {
    font-style: italic;
    font-weight: bold;
}

.small .underline {
    text-decoration: underline;
}

.active {
    background: linear-gradient(#fbd4a6, #fbb24e 55%, #fde38f);
}

.end-mark {
    width: 6px;
    height: 1px;
    background-color: #555;
    align-self: flex-end;
    margin: 0 4px 6px 8px;
}

.small .caret {
    margin: 0 4px 0 4px;
}

.object-select {
    display: flex;
    align-items: center;
    width: 201px;
    height: 30px;
    margin-right: 2px;
    padding-left: 8px;
    background-color: #e6e6e6;
}

.object-select svg {
    width: 20px;
    height: 20px;
}

.object-select select {
    flex: 1;
    background-color: transparent;
    padding-left: 5px;
}

/* drawing tools */
.workspace {
    flex: 1;
    min-height: 0;
    display: flex;
}

.tools {
    width: 57px;
    flex: none;
    padding-top: 4px;
}

.tool-list {
    background-color: #f0f0f0;
    margin: 0 1px;
    display: flex;
    flex-direction: column;
    align-items: center;
}

.grip-h {
    width: 34px;
    height: 2px;
    margin: 5px 0 3px;
    background: repeating-linear-gradient(90deg, #666 0 2px, transparent 2px 4px);
}

.tool-list button {
    width: 52px;
    height: 34px;
    display: flex;
    align-items: center;
    justify-content: center;
    gap: 8px;
}

.tool-list button svg {
    width: 28px;
    height: 28px;
}

.tool-list button .caret {
    width: 6px;
    height: 4px;
    margin-right: -2px;
}

.tool-list .boxed {
    width: 34px;
    border: 1px solid #b0b0b0;
}

.tool-list .boxed svg {
    opacity: 0.3;
}

.tool-list hr {
    width: 46px;
    margin: 3px 0;
    border: none;
    border-top: 1px solid #b5bcc4;
}

.expand {
    width: 8px;
    height: 8px;
    align-self: flex-end;
    margin: 5px 4px 4px;
}

/* document */
.content {
    flex: 1;
    min-width: 0;
    display: flex;
    flex-direction: column;
}

.columns {
    flex: 1;
    min-height: 0;
    display: flex;
    gap: 8px;
    padding-right: 1px;
}

.document {
    flex: 1;
    min-width: 0;
    display: flex;
    flex-direction: column;
}

.tabs {
    height: 29px;
    flex: none;
    display: flex;
    align-items: flex-end;
}

.tab {
    height: 26px;
    display: flex;
    align-items: center;
    gap: 8px;
    padding: 0 36px 0 6px;
    font-size: 14px;
    background: linear-gradient(#f0f0f0, #dedede);
    border: 1px solid #a8a8a8;
    border-bottom: none;
}

.tab svg {
    width: 16px;
    height: 20px;
}

.tab.current {
    background: #fff;
    height: 30px;
    margin-bottom: -1px;
    padding: 0 8px 3px 6px;
    z-index: 1;
}

.tab .close {
    width: 11px;
    height: 11px;
    margin-left: 6px;
}

.tab-menu {
    width: 10px;
    height: 10px;
    margin: 0 6px 9px auto;
}

.frame {
    flex: 1;
    min-height: 0;
    background-color: #fff;
    border: 1px solid #a8a8a8;
    padding: 3px 2px 2px 3px;
    display: grid;
    grid-template-columns: 32px 1fr 22px;
    grid-template-rows: 31px 1fr 20px;
}

.corner {
    border: 1px solid #666;
    display: grid;
    place-items: center;
    margin-right: 1px;
}

.corner svg {
    width: 22px;
    height: 27px;
}

.corner-a {
    font: bold 18px "Liberation Serif", serif;
    fill: #2f6fb0;
}

.ruler-h {
    grid-column: 2 / 4;
    width: 100%;
    height: 31px;
}

.ruler-v {
    grid-row: 2 / 4;
    width: 32px;
    height: 100%;
}

.tick {
    stroke: #555;
}

.tick.half {
    stroke: #999;
}

.ruler-text {
    font-size: 14px;
    fill: #222;
}

.sheet {
    width: 100%;
    height: 100%;
    background-color: #e6e6e6;
}

.crisp {
    shape-rendering: crispEdges;
}

.label {
    fill: #fff;
    stroke: #111;
    stroke-width: 2;
}

.logo {
    fill: none;
    stroke: #222a38;
    stroke-width: 2;
}

.brand {
    font: bold 88px "DejaVu Sans", sans-serif;
    fill: #222a38;
}

.field {
    font: 78px "Liberation Sans", sans-serif;
}

.caption {
    font: 35px "Liberation Sans", sans-serif;
}

.caption.end {
    text-anchor: end;
}

.caption-box {
    fill: #fff;
    stroke: #1f8a1f;
}

.selection {
    fill: none;
    stroke: #4a4aff;
}

.guide {
    stroke: #1a1aff;
    fill: none;
}

.scroll-v, .scroll-h {
    background-color: #d9d9d9;
    display: flex;
}

.scroll-v {
    flex-direction: column;
}

.scroll-h {
    grid-column: 2;
}

.scroll-v button, .scroll-h button {
    flex: none;
    background-color: #fff;
    border: 1px solid #bbb;
    display: grid;
    place-items: center;
}

.scroll-v button {
    height: 20px;
}

.scroll-h button {
    width: 21px;
}

.scroll-v button:last-child {
    margin-top: auto;
}

.scroll-h button:last-child {
    margin-left: auto;
}

.scroll-v svg {
    width: 10px;
    height: 6px;
}

.scroll-h svg {
    width: 6px;
    height: 10px;
}

.scroll-v path, .scroll-h path {
    fill: none;
    stroke: #555;
    stroke-width: 1.5;
}

.thumb {
    background-color: #fff;
    border: 1px solid #aaa;
}

.scroll-v .thumb {
    height: 110px;
}

.scroll-h .thumb {
    width: 252px;
}

/* side panels */
.panels {
    width: 295px;
    flex: none;
    display: flex;
    flex-direction: column;
    gap: 10px;
    padding-bottom: 2px;
}

.panel {
    flex: 1;
    border: 1px solid #a8a8a8;
    padding: 0 2px 3px 3px;
    display: flex;
    flex-direction: column;
    position: relative;
}

.panel h2 {
    margin: 0;
    padding: 4px 5px 3px 0;
    height: 28px;
    display: flex;
    align-items: center;
    font-size: 15px;
    font-weight: normal;
}

.panel h2 svg:first-child {
    width: 20px;
    height: 20px;
    margin-right: 6px;
}

.panel h2 .caret {
    width: 10px;
    height: 5px;
    margin: 0 13px 0 auto;
}

.panel h2 .close {
    width: 12px;
    height: 12px;
}

.tree {
    flex: 1;
    margin: 0;
    padding: 0 0 0 27px;
    list-style: none;
    background-color: #fff;
    border: 1px solid #7f8592;
}

.tree li {
    height: 24px;
    display: flex;
    align-items: center;
    gap: 6px;
    white-space: nowrap;
}

.tree li svg {
    width: 20px;
    height: 20px;
}

.tree li .node {
    width: 9px;
    height: 12px;
    margin: 0 5px 0 -20px;
}

.tree .child {
    padding-left: 22px;
}

.leaf {
    display: flex;
    align-items: center;
    gap: 7px;
    height: 24px;
    padding: 0 2px;
    font-size: 14px;
    border: 1px solid transparent;
    border-radius: 3px;
}

.tree .leaf svg {
    width: 14px;
    height: 14px;
}

.leaf.selected {
    background-color: #abe0fb;
    border-color: #6fa3cc;
}

.leaf.plain {
    padding-left: 23px;
}

.highlight {
    position: absolute;
    border: 4px solid #ff1e10;
    border-radius: 5px;
}

.panel .highlight {
    left: 11px;
    top: 33px;
    width: 142px;
    height: 55px;
}

/* colours and status */
.colorbar {
    height: 31px;
    flex: none;
    display: flex;
    align-items: center;
    gap: 5px;
    padding-left: 4px;
}

.color-tool {
    width: 23px;
    height: 21px;
    border: 1px solid #777;
    display: grid;
    place-items: center;
}

.color-tool svg {
    width: 18px;
    height: 18px;
}

.swatches {
    display: flex;
}

.swatches button {
    width: 20px;
    height: 20px;
    border: 1px solid #6d6d6d;
}

.statusbar {
    height: 28px;
    flex: none;
    background-color: #f0f0f0;
    display: flex;
    align-items: stretch;
    font-size: 14px;
    line-height: 28px;
    position: relative;
}

.statusbar span {
    width: 168px;
    padding-left: 6px;
    border-right: 1px solid #666;
}

.statusbar .printer-name {
    width: 230px;
    padding-left: 5px;
}

.watermark {
    margin-left: auto;
    padding-right: 8px;
    font-size: 15px;
    color: #fff;
    text-decoration: none;
    text-shadow: 1px 1px 1px #bbb;
}

/* properties dialog */
.dialog {
    position: absolute;
    left: 539px;
    top: 168px;
    width: 725px;
    background-color: #fff;
    border: 1px solid #1979ca;
}

.dialog-title {
    display: flex;
    align-items: center;
    height: 34px;
    padding: 0 20px 0 8px;
    gap: 13px;
    border-bottom: 1px solid #d0d0d0;
}

.dialog-title > svg {
    width: 16px;
    height: 18px;
}

.dialog-title button {
    margin-left: auto;
}

.dialog-title button svg {
    width: 14px;
    height: 14px;
}

.dialog-main {
    display: flex;
}

.pages {
    width: 138px;
    height: 693px;
    padding-top: 6px;
    background: linear-gradient(#d3d3d3, #e6e6e6 60%);
    display: flex;
    flex-direction: column;
}

.pages button {
    height: 92px;
    display: flex;
    flex-direction: column;
    align-items: center;
    gap: 4px;
    white-space: nowrap;
    font-size: 15px;
}

.page-icon {
    width: 56px;
    height: 56px;
    display: grid;
    place-items: center;
    border-radius: 3px;
}

.page-icon svg {
    width: 38px;
    height: 38px;
}

.page-icon.active {
    border: 1px solid #a98a55;
}

.letter-a {
    font: 54px/56px "Liberation Serif", serif;
    color: #555;
}

.page {
    flex: 1;
    padding: 0 5px 0 6px;
    display: flex;
    flex-direction: column;
}

.banner {
    height: 51px;
    margin: 0 -5px 0 -6px;
    padding: 0 0 0 10px;
    display: flex;
    align-items: center;
    gap: 17px;
    color: #00f;
    background: linear-gradient(90deg, #fff 10%, transparent 22%), linear-gradient(#c8ccce, #d6d8da 45%, #fff);
}

.banner-icon {
    width: 32px;
    height: 34px;
}

.banner-art {
    width: 290px;
    height: 50px;
    margin-left: auto;
}

.options {
    height: 80px;
    padding-top: 4px;
}

.radio {
    display: flex;
    align-items: center;
    gap: 8px;
}

.radio input {
    appearance: none;
    width: 15px;
    height: 15px;
    margin: 0 0 0 1px;
    border: 1px solid #444;
    border-radius: 50%;
    background-color: #fff;
}

.radio input:checked {
    background: radial-gradient(#222 0 4px, #fff 5px);
}

.option-row {
    display: flex;
    justify-content: space-between;
    align-items: center;
    margin-top: 12px;
}

.new-source {
    width: 188px;
    height: 32px;
    padding-right: 18px;
    display: flex;
    align-items: center;
    justify-content: center;
    background-color: #dfdfdf;
    border: 1px solid #666;
    outline: 1px dotted #222;
    outline-offset: -5px;
    position: relative;
}

.new-source svg {
    width: 6px;
    height: 10px;
    position: absolute;
    right: 7px;
}

.tree-box {
    position: relative;
    height: 431px;
    display: flex;
}

.tree.roomy {
    padding-left: 28px;
}

.roomy li {
    height: 25px;
}

.tree-box .highlight {
    left: -15px;
    top: 73px;
    width: 180px;
    height: 63px;
}

.preview {
    margin: 14px 1px 0;
    padding: 0 6px;
    height: 109px;
    border: 1px solid #d5dfe5;
    border-radius: 4px;
}

.preview legend {
    padding: 0 4px;
}

.preview p {
    margin: 0;
    font: 15px/15px "Liberation Sans", sans-serif;
}

.dialog-actions {
    display: flex;
    justify-content: flex-end;
    gap: 13px;
    padding: 5px;
}

.dialog-actions button {
    width: 94px;
    height: 29px;
    background-color: #dfdfdf;
    border: 1px solid #666;
}
```
FILE: script.js
```js
const svgNs = 'http://www.w3.org/2000/svg';
const unit = 27.2;

function add(parent, name, attrs, text) {
    const el = document.createElementNS(svgNs, name);
    Object.keys(attrs).forEach(key => el.setAttribute(key, attrs[key]));
    if (text !== undefined) {
        el.textContent = text;
    }
    parent.appendChild(el);
}

function drawRulers() {
    const h = document.getElementById('rulerH');
    const v = document.getElementById('rulerV');
    const width = h.clientWidth;
    const height = v.clientHeight;
    add(h, 'rect', { x: 396, y: 0, width: 299, height: 31, fill: '#000' });
    add(v, 'rect', { x: 0, y: 364, width: 32, height: 85, fill: '#000' });
    for (let i = 0; i * unit < Math.max(width, height); i++) {
        const pos = Math.round(i * unit) + 0.5;
        const major = i % 5 === 0;
        const cls = major ? 'tick half' : 'tick';
        if (pos < width - 20) {
            add(h, 'line', { x1: pos, x2: pos, y1: major ? 0 : 21, y2: 31, class: cls });
        }
        if (pos < height) {
            add(v, 'line', { y1: pos, y2: pos, x1: major ? 0 : 21, x2: 32, class: cls });
        }
        if (i % 10 === 0) {
            add(h, 'text', { x: pos + 1, y: 13, class: 'ruler-text' }, i);
            if (pos < height - 20) {
                add(v, 'text', { x: 0, y: pos + 13, class: 'ruler-text' }, i);
            }
        }
    }
}

// bar start and width
const bars = [[57, 19], [85, 10], [113, 28], [159, 19], [186, 28], [233, 9], [260, 38], [306, 19],
    [334, 19], [362, 19], [389, 28], [445, 19]];

const matrix = [
    '0101010', '1010111', '1001100', '0110001', '0101110', '1011101', '1010100', '0001011',
    '0001010', '1111001', '1011010', '0110011', '1001100', '1100101', '1100010', '1111111'
];

function drawCodes() {
    const barGroup = document.getElementById('bars');
    bars.forEach(bar => add(barGroup, 'rect', { x: bar[0], y: 467, width: bar[1], height: 83 }));

    const matrixGroup = document.getElementById('matrix');
    matrix.forEach((row, j) => {
        [...row].forEach((cell, i) => {
            if (cell === '1') {
                add(matrixGroup, 'rect', { x: 1156 + i * 25.3, y: 63 + j * 25.35, width: 25.4, height: 25.4 });
            }
        });
    });
}

const colors = ['000000', '0000ff', '00ffff', '00ff00', 'ff0000', 'ff00ff', 'ffff00', 'ffffff',
    '333333', '666666', '808080', '969696', 'c0c0c0', 'cbcbcb', 'dddddd', '80ffff', '0080c0', '0080ff',
    '0000a0', '000040', '000080', '004080', '8080c0', '8080ff', '8000ff', '400080', '800080', 'ff80ff',
    'ff80c0', 'ff8080', 'ff8040', 'ff8000', 'ff0080', '400000', '804000', '800040', '804040', '800000',
    '400040', '400040', '808000', '808040', 'ffff80', '80ff80', '00ff40', '00ff80', '80ff00', '008040',
    '008000', '004000', '004040', '408080', '008080'];

function drawSwatches() {
    const box = document.getElementById('swatches');
    for (let i = 0; i < 64; i++) {
        const color = '#' + (colors[i] || 'ffffff');
        const button = document.createElement('button');
        button.style.backgroundColor = color;
        button.setAttribute('aria-label', color);
        box.appendChild(button);
    }
}

drawRulers();
drawCodes();
drawSwatches();
```
